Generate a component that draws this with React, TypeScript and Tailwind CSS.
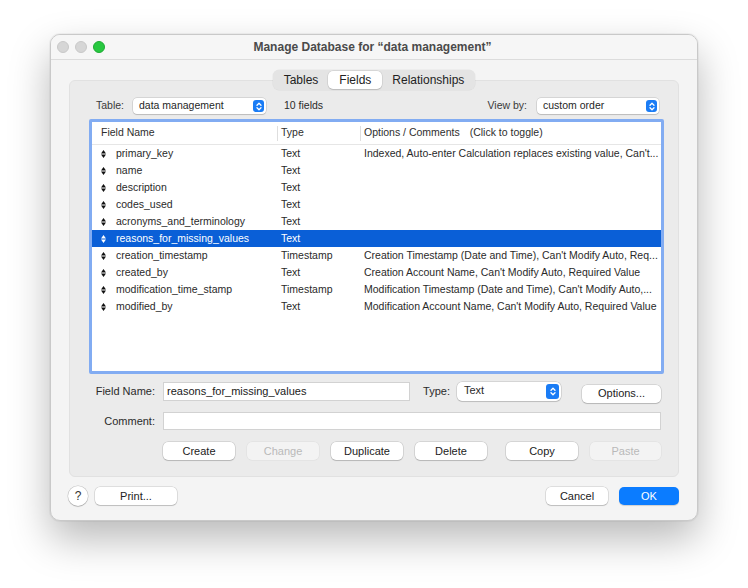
import type { ReactNode } from "react";

const font = { fontFamily: '"Liberation Sans", Arial, sans-serif' };

type Field = { name: string; type: string; opts: string };

const fields: Field[] = [
  { name: "primary_key", type: "Text", opts: "Indexed, Auto-enter Calculation replaces existing value, Can't..." },
  { name: "name", type: "Text", opts: "" },
  { name: "description", type: "Text", opts: "" },
  { name: "codes_used", type: "Text", opts: "" },
  { name: "acronyms_and_terminology", type: "Text", opts: "" },
  { name: "reasons_for_missing_values", type: "Text", opts: "" },
  { name: "creation_timestamp", type: "Timestamp", opts: "Creation Timestamp (Date and Time), Can't Modify Auto, Req..." },
  { name: "created_by", type: "Text", opts: "Creation Account Name, Can't Modify Auto, Required Value" },
  { name: "modification_time_stamp", type: "Timestamp", opts: "Modification Timestamp (Date and Time), Can't Modify Auto,..." },
  { name: "modified_by", type: "Text", opts: "Modification Account Name, Can't Modify Auto, Required Value" },
];

const SELECTED = 5;

export default function App() {
  return (
    <div className="min-h-[588px] w-[748px] bg-white pl-[50px] pt-[34px]" style={font}>
      <Window />
    </div>
  );
}

/* ---------- window ---------- */
function Window() {
  return (
    <div className="flex h-[487px] w-[648px] flex-col overflow-hidden rounded-[10px] border border-[#c9c9c9] bg-[#f4f4f4] shadow-[0_18px_40px_rgba(0,0,0,0.28),0_0_0_1px_rgba(0,0,0,0.04)]">
      {/* title bar */}
      <div className="flex h-[25px] shrink-0 items-center border-b border-[#dcdcdc] bg-[#f6f6f6] px-[5px]">
        <div className="flex items-center gap-[6px] pl-[1px]">
          <span className="h-[12px] w-[12px] rounded-full border border-[#c8c8c8] bg-[#d6d6d6]" />
          <span className="h-[12px] w-[12px] rounded-full border border-[#c8c8c8] bg-[#d6d6d6]" />
          <span className="h-[12px] w-[12px] rounded-full border border-[#1faa34] bg-[#28c840]" />
        </div>
        <div className="flex-1 pr-[52px] text-center text-[12px] font-bold text-[#4a4a4a]">
          Manage Database for “data management”
        </div>
      </div>

      {/* body */}
      <div className="flex flex-1 flex-col px-[18px] pt-[10px]">
        <Tabs />
        <div className="-mt-[10px] flex h-[397px] flex-col rounded-[6px] border border-[#e1e1e1] bg-[#ebebeb] pl-[19px] pr-[14px] pt-[17px]">
          {/* table / view by */}
          <div className="flex h-[16px] items-center text-[10.5px] text-[#2a2a2a]">
            <span className="w-[44px] pl-[7px] text-[#3a3a3a]">Table:</span>
            <Popup width="w-[133px]" label="data management" />
            <span className="ml-[18px]">10 fields</span>
            <span className="ml-auto mr-[10px] text-[#3a3a3a]">View by:</span>
            <Popup width="w-[122px]" label="custom order" />
            <span className="w-[5px]" />
          </div>

          <FieldList />

          {/* field name / type */}
          <div className="mt-[8px] flex h-[19px] items-center text-[11px] text-[#2a2a2a]">
            <span className="w-[74px] pr-[8px] text-right">Field Name:</span>
            <div className="flex h-[19px] w-[247px] shrink-0 items-center border border-[#d2d2d2] bg-white px-[3px] text-[11px] text-[#1a1a1a]">
              reasons_for_missing_values
            </div>
            <span className="ml-[12px] w-[35px] shrink-0 pr-[7px] text-right">Type:</span>
            <div className="flex h-[19px] w-[104px] shrink-0 items-center justify-between rounded-[5px] bg-white pl-[7px] pr-[2px] shadow-[0_0_0_0.5px_rgba(0,0,0,0.18),0_1px_1px_rgba(0,0,0,0.12)]">
              <span className="-mt-[3px]">Text</span>
              <Stepper />
            </div>
            <Btn className="ml-[21px] mt-[4px] w-[79px]">Options...</Btn>
          </div>

          {/* comment */}
          <div className="mt-[11px] flex h-[18px] items-center pr-[3px] text-[11px] text-[#2a2a2a]">
            <span className="w-[74px] pr-[8px] text-right">Comment:</span>
            <div className="h-[18px] flex-1 border border-[#d2d2d2] bg-white" />
          </div>

          {/* buttons */}
          <div className="mt-[12px] flex items-center pl-[74px]">
            <Btn className="w-[72px]">Create</Btn>
            <Btn className="ml-[12px] w-[72px]" disabled>Change</Btn>
            <Btn className="ml-[12px] w-[72px]">Duplicate</Btn>
            <Btn className="ml-[12px] w-[72px]">Delete</Btn>
            <Btn className="ml-[19px] w-[72px]">Copy</Btn>
            <Btn className="ml-[12px] w-[71px]" disabled>Paste</Btn>
          </div>
        </div>

        {/* bottom bar */}
        <div className="mt-[9px] flex items-center">
          <div className="-ml-[1px] flex h-[20px] w-[20px] items-center justify-center rounded-full bg-white text-[12px] text-[#333] shadow-[0_0_0_0.5px_rgba(0,0,0,0.2),0_1px_1px_rgba(0,0,0,0.15)]">
            ?
          </div>
          <Btn className="ml-[7px] w-[82px]">Print...</Btn>
          <Btn className="ml-auto w-[62px]">Cancel</Btn>
          <button className="ml-[11px] flex h-[18px] w-[60px] items-center justify-center rounded-[5px] bg-[#0b7cff] text-[11px] text-white shadow-[0_1px_1px_rgba(0,0,0,0.15)]">
            OK
          </button>
        </div>
      </div>
    </div>
  );
}

/* ---------- segmented tabs ---------- */
function Tabs() {
  const tabs = ["Tables", "Fields", "Relationships"];
  return (
    <div className="relative z-10 mx-auto flex h-[20px] items-center rounded-[6px] bg-[#e4e4e4] px-[1px] text-[12px] text-[#222] shadow-[0_0_0_0.5px_rgba(0,0,0,0.06)]">
      {tabs.map((t) => (
        <div
          key={t}
          className={
            t === "Fields"
              ? "flex h-[18px] items-center rounded-[5px] bg-white px-[11px] shadow-[0_0_0_0.5px_rgba(0,0,0,0.12),0_1px_1px_rgba(0,0,0,0.12)]"
              : "flex h-[18px] items-center px-[10px]"
          }
        >
          {t}
        </div>
      ))}
    </div>
  );
}

/* ---------- popup button ---------- */
function Popup({ width, label }: { width: string; label: string }) {
  return (
    <div className={`${width} flex h-[16px] items-center justify-between rounded-[4px] bg-white pl-[6px] pr-[2px] text-[10.5px] text-[#1f1f1f] shadow-[0_0_0_0.5px_rgba(0,0,0,0.18),0_1px_1px_rgba(0,0,0,0.12)]`}>
      <span>{label}</span>
      <Stepper small />
    </div>
  );
}

function Stepper({ small }: { small?: boolean }) {
  const h = small ? "h-[12px] w-[11px]" : "h-[15px] w-[13px]";
  return (
    <span className={`${h} flex items-center justify-center rounded-[3px] bg-[#1a7cf5]`}>
      <svg width="6" height="9" viewBox="0 0 6 9" fill="none" stroke="white" strokeWidth="1.3" strokeLinecap="round" strokeLinejoin="round">
        <path d="M1 3.2 L3 1.2 L5 3.2" />
        <path d="M1 5.8 L3 7.8 L5 5.8" />
      </svg>
    </span>
  );
}

/* ---------- push button ---------- */
function Btn({ children, className = "", disabled }: { children: ReactNode; className?: string; disabled?: boolean }) {
  return (
    <button
      className={`${className} flex h-[18px] shrink-0 items-center justify-center rounded-[5px] text-[11px] ${
        disabled
          ? "bg-[#f3f3f3] text-[#b9b9b9] shadow-[0_0_0_0.5px_rgba(0,0,0,0.06)]"
          : "bg-white text-[#222] shadow-[0_0_0_0.5px_rgba(0,0,0,0.18),0_1px_1px_rgba(0,0,0,0.14)]"
      }`}
    >
      {children}
    </button>
  );
}

/* ---------- field list ---------- */
function MoveArrow({ white }: { white?: boolean }) {
  return (
    <svg width="5" height="8" viewBox="0 0 5 8" fill={white ? "#fff" : "#111"}>
      <path d="M2.5 0 L5 3.4 L0 3.4 Z" />
      <path d="M2.5 8 L5 4.6 L0 4.6 Z" />
    </svg>
  );
}

function FieldList() {
  return (
    <div className="mt-[5px] h-[255px] w-[575px] rounded-[2px] border-[3px] border-[#82acf2] bg-white">
      <div className="flex h-[23px] items-center border-b border-[#e6e6e6] text-[10.5px] text-[#2e2e2e]">
        <div className="w-[185px] pl-[9px]">Field Name</div>
        <div className="h-[15px] w-px bg-[#dedede]" />
        <div className="w-[82px] pl-[3px]">Type</div>
        <div className="h-[15px] w-px bg-[#dedede]" />
        <div className="pl-[3px]">
          Options / Comments<span className="ml-[10px]">(Click to toggle)</span>
        </div>
      </div>
      {fields.map((f, i) => {
        const sel = i === SELECTED;
        return (
          <div
            key={f.name}
            className={`flex h-[17px] items-center text-[10.5px] ${sel ? "bg-[#0a5fd7] text-white" : "text-[#2a2a2a]"}`}
          >
            <div className="flex w-[186px] items-center pl-[9px]">
              <MoveArrow white={sel} />
              <span className="ml-[10px] whitespace-nowrap">{f.name}</span>
            </div>
            <div className="w-[83px] pl-[3px]">{f.type}</div>
            <div className="whitespace-nowrap pl-[3px]">{f.opts}</div>
          </div>
        );
      })}
    </div>
  );
}
